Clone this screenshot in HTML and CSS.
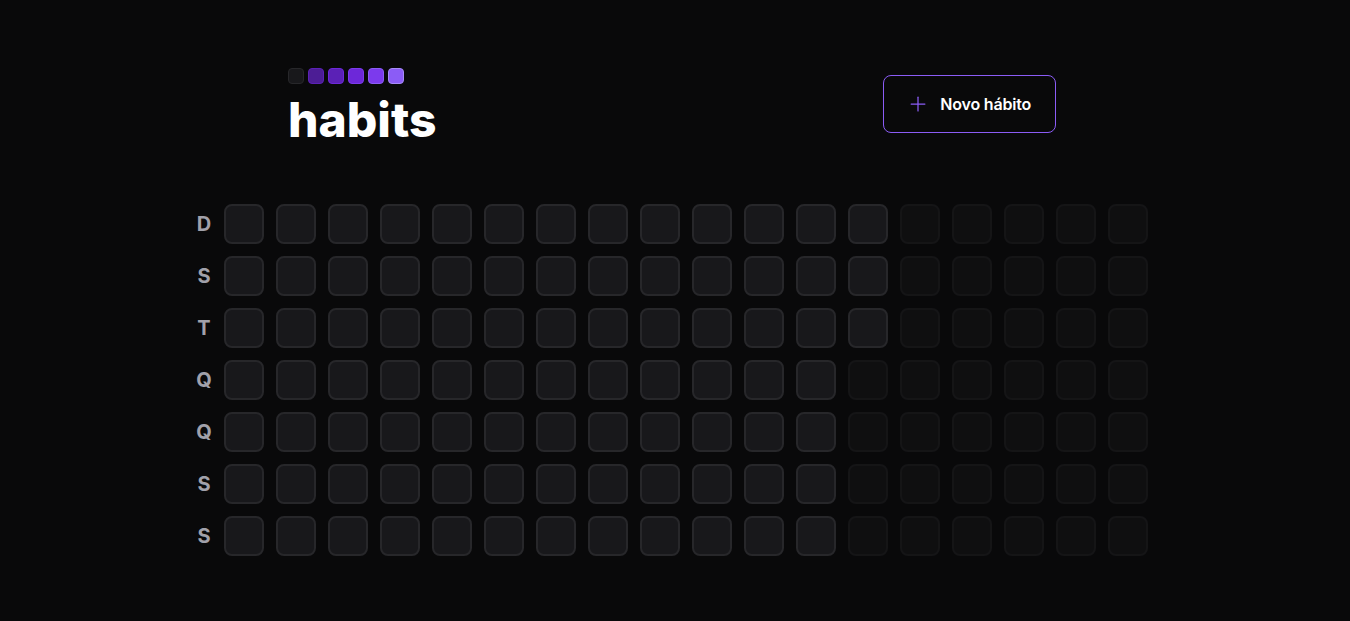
FILE: index.html
```html
<!DOCTYPE html>
<html lang="pt-BR">
<head>
<meta charset="utf-8">
<title>habits</title>
<link rel="stylesheet" href="styles.css">
</head>
<body>
<main class="screen">
  <div class="content">
    <header class="header">
      <div class="logo">
        <div class="logo-squares">
          <span class="ls ls0"></span>
          <span class="ls ls1"></span>
          <span class="ls ls2"></span>
          <span class="ls ls3"></span>
          <span class="ls ls4"></span>
          <span class="ls ls5"></span>
        </div>
        <div class="logo-text">habits</div>
      </div>
      <button class="new-btn" type="button">
        <svg class="plus" width="20" height="20" viewBox="0 0 256 256" fill="none" stroke="currentColor" stroke-width="16" stroke-linecap="round"><line x1="40" y1="128" x2="216" y2="128"/><line x1="128" y1="40" x2="128" y2="216"/></svg>
        <span>Novo hábito</span>
      </button>
    </header>
    <section class="table">
      <div class="weekdays">
        <div class="wd">D</div>
        <div class="wd">S</div>
        <div class="wd">T</div>
        <div class="wd">Q</div>
        <div class="wd">Q</div>
        <div class="wd">S</div>
        <div class="wd">S</div>
      </div>
      <div class="days" id="days"></div>
    </section>
  </div>
</main>
<script src="app.js"></script>
</body>
</html>
```
FILE: app.js
```js
(function () {
  var grid = document.getElementById('days');
  var total = 18 * 7;
  var active = 12 * 7 + 3;
  for (var i = 0; i < total; i++) {
    var d = document.createElement('div');
    d.className = i < active ? 'day' : 'day placeholder';
    grid.appendChild(d);
  }
})();
```
FILE: styles.css
```css
* { box-sizing: border-box; }
html, body { margin: 0; padding: 0; }
body {
  background: #09090a;
  color: #fff;
  font-family: Inter, "Noto Sans", sans-serif;
  width: 1350px;
  height: 621px;
  overflow: hidden;
}
.screen {
  width: 1344px;
  height: 621px;
  padding-top: 2px;
  display: flex;
  justify-content: center;
  align-items: center;
}
.content {
  width: 1024px;
  padding: 0 24px;
  display: flex;
  flex-direction: column;
  align-items: flex-start;
  gap: 64px;
}
.header {
  width: 768px;
  align-self: center;
  display: flex;
  align-items: center;
  justify-content: space-between;
}
.logo { display: flex; flex-direction: column; }
.logo-squares { display: flex; gap: 4px; }
.ls {
  width: 16px;
  height: 16px;
  border-radius: 4px;
  border: 1px solid;
}
.ls0 { background: #18181b; border-color: #27272a; }
.ls1 { background: #4c1d95; border-color: #5b21b6; }
.ls2 { background: #5b21b6; border-color: #6d28d9; }
.ls3 { background: #6d28d9; border-color: #7c3aed; }
.ls4 { background: #7c3aed; border-color: #8b5cf6; }
.ls5 { background: #8b5cf6; border-color: #a78bfa; }
.logo-text {
  margin-top: 16px;
  font-size: 48px;
  font-weight: 800;
  line-height: 40px;
  color: #fff;
}
.new-btn {
  display: flex;
  align-items: center;
  gap: 12px;
  padding: 16px 24px;
  background: transparent;
  border: 1px solid #8b5cf6;
  border-radius: 8px;
  color: #fff;
  font-family: Inter, "Noto Sans", sans-serif;
  font-size: 16px;
  font-weight: 600;
  line-height: 24px;
  letter-spacing: -0.2px;
}
.plus { color: #8b5cf6; display: block; }
.table { display: flex; }
.weekdays {
  display: grid;
  grid-template-rows: repeat(7, 40px);
  gap: 12px;
}
.wd {
  width: 40px;
  height: 40px;
  display: flex;
  align-items: center;
  justify-content: center;
  color: #a1a1aa;
  font-size: 20px;
  font-weight: 700;
}
.days {
  display: grid;
  grid-template-rows: repeat(7, 40px);
  grid-auto-flow: column;
  grid-auto-columns: 40px;
  gap: 12px;
}
.day {
  width: 40px;
  height: 40px;
  background: #18181b;
  border: 2px solid #27272a;
  border-radius: 8px;
}
.day.placeholder { opacity: 0.4; }
```
